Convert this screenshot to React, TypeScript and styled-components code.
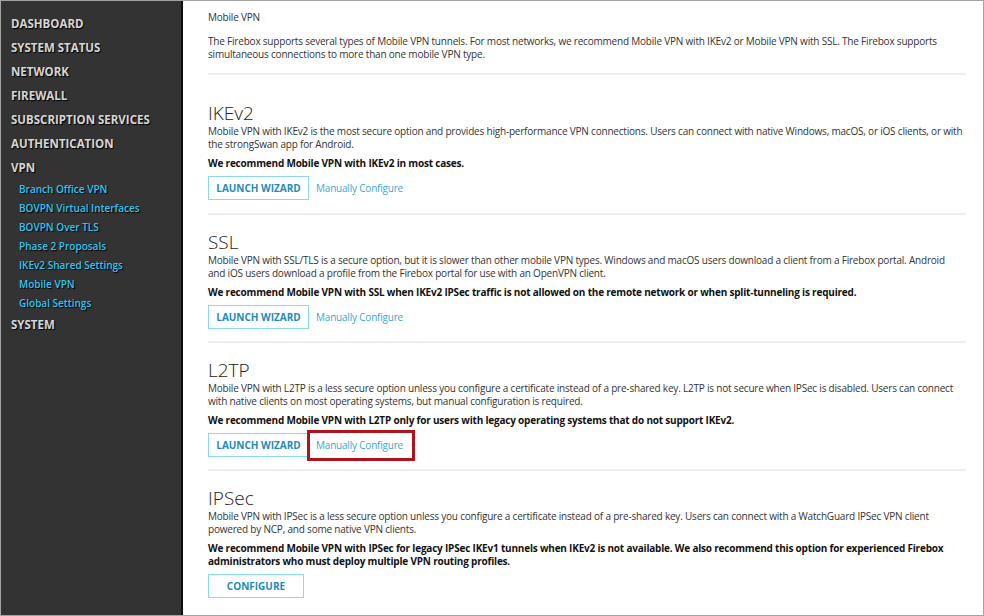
import styled, { createGlobalStyle } from "styled-components";

const GlobalStyle = createGlobalStyle`
    html, body {
        margin: 0;
        padding: 0;
        background: #ffffff;
    }
    * {
        box-sizing: border-box;
    }
`;

type NavItem = {
    label: string;
    sub?: boolean;
};

const navItems: NavItem[] = [
    { label: "DASHBOARD" },
    { label: "SYSTEM STATUS" },
    { label: "NETWORK" },
    { label: "FIREWALL" },
    { label: "SUBSCRIPTION SERVICES" },
    { label: "AUTHENTICATION" },
    { label: "VPN" },
    { label: "Branch Office VPN", sub: true },
    { label: "BOVPN Virtual Interfaces", sub: true },
    { label: "BOVPN Over TLS", sub: true },
    { label: "Phase 2 Proposals", sub: true },
    { label: "IKEv2 Shared Settings", sub: true },
    { label: "Mobile VPN", sub: true },
    { label: "Global Settings", sub: true },
    { label: "SYSTEM" },
];

type VpnSection = {
    title: string;
    description: string;
    recommend: string;
    wizard: boolean;
    highlight?: boolean;
};

const sections: VpnSection[] = [
    {
        title: "IKEv2",
        description:
            "Mobile VPN with IKEv2 is the most secure option and provides high-performance VPN connections. Users can connect with native Windows, macOS, or iOS clients, or with the strongSwan app for Android.",
        recommend: "We recommend Mobile VPN with IKEv2 in most cases.",
        wizard: true,
    },
    {
        title: "SSL",
        description:
            "Mobile VPN with SSL/TLS is a secure option, but it is slower than other mobile VPN types. Windows and macOS users download a client from a Firebox portal. Android and iOS users download a profile from the Firebox portal for use with an OpenVPN client.",
        recommend:
            "We recommend Mobile VPN with SSL when IKEv2 IPSec traffic is not allowed on the remote network or when split-tunneling is required.",
        wizard: true,
    },
    {
        title: "L2TP",
        description:
            "Mobile VPN with L2TP is a less secure option unless you configure a certificate instead of a pre-shared key. L2TP is not secure when IPSec is disabled. Users can connect with native clients on most operating systems, but manual configuration is required.",
        recommend:
            "We recommend Mobile VPN with L2TP only for users with legacy operating systems that do not support IKEv2.",
        wizard: true,
        highlight: true,
    },
    {
        title: "IPSec",
        description:
            "Mobile VPN with IPSec is a less secure option unless you configure a certificate instead of a pre-shared key. Users can connect with a WatchGuard IPSec VPN client powered by NCP, and some native VPN clients.",
        recommend:
            "We recommend Mobile VPN with IPSec for legacy IPSec IKEv1 tunnels when IKEv2 is not available. We also recommend this option for experienced Firebox administrators who must deploy multiple VPN routing profiles.",
        wizard: false,
    },
];

const App = () => {
    return (
        <>
            <GlobalStyle />
            <Frame>
                <Sidebar>
                    {navItems.map((item) => (
                        <NavLink key={item.label} $sub={item.sub}>
                            {item.label}
                        </NavLink>
                    ))}
                </Sidebar>
                <Content>
                    <PageTitle>Mobile VPN</PageTitle>
                    <Intro>
                        The Firebox supports several types of Mobile VPN tunnels. For most
                        networks, we recommend Mobile VPN with IKEv2 or Mobile VPN with SSL.
                        The Firebox supports simultaneous connections to more than one mobile
                        VPN type.
                    </Intro>
                    {sections.map((section, index) => (
                        <Section key={section.title} $first={index === 0}>
                            <SectionTitle>{section.title}</SectionTitle>
                            <Text>{section.description}</Text>
                            <Recommend>{section.recommend}</Recommend>
                            <Actions>
                                {section.wizard ? (
                                    <>
                                        <OutlineButton $wide>LAUNCH WIZARD</OutlineButton>
                                        <TextLink $highlight={section.highlight}>
                                            Manually Configure
                                        </TextLink>
                                    </>
                                ) : (
                                    <OutlineButton>CONFIGURE</OutlineButton>
                                )}
                            </Actions>
                        </Section>
                    ))}
                </Content>
            </Frame>
        </>
    );
};

const Frame = styled.div`
    width: 984px;
    height: 616px;
    border: 1px solid #a3a3a3;
    display: flex;
    overflow: hidden;
    font-family: "Open Sans", "Liberation Sans", sans-serif;
`;

const Sidebar = styled.nav`
    width: 182px;
    flex-shrink: 0;
    background: #333333;
    border-right: 2px solid #0e0e0e;
    padding: 11px 0 0 0;
    display: flex;
    flex-direction: column;
`;

const NavLink = styled.div<{ $sub?: boolean }>`
    padding-left: ${({ $sub }) => ($sub ? "18px" : "10px")};
    height: ${({ $sub }) => ($sub ? "19px" : "24px")};
    line-height: ${({ $sub }) => ($sub ? "19px" : "24px")};
    font-size: ${({ $sub }) => ($sub ? "10px" : "11.5px")};
    font-weight: ${({ $sub }) => ($sub ? 600 : 700)};
    color: ${({ $sub }) => ($sub ? "#30c6f4" : "#d6d6d6")};
    text-shadow: 1px 1px 1px #000000;
    white-space: nowrap;
`;

const Content = styled.main`
    flex: 1;
    padding: 10px 17px 0 25px;
    color: #333333;
    font-size: 10px;
    line-height: 13px;
    letter-spacing: -0.2px;
`;

const PageTitle = styled.div`
    font-size: 10px;
    line-height: 13px;
    margin-bottom: 11px;
`;

const Intro = styled.p`
    margin: 0;
    padding-bottom: 12px;
    border-bottom: 2px solid #ededed;
`;

const Section = styled.section<{ $first?: boolean }>`
    padding: ${({ $first }) => ($first ? "26px 0 13px 0" : "15px 0 12px 0")};
    border-bottom: 2px solid #ededed;
    &:last-child {
        border-bottom: none;
    }
`;

const SectionTitle = styled.h2`
    margin: 0;
    font-size: 19px;
    line-height: 24px;
    font-weight: 300;
    letter-spacing: 0;
    color: #222222;
`;

const Text = styled.p`
    margin: 0;
    max-width: 755px;
`;

const Recommend = styled.p`
    margin: 6px 0 0 0;
    font-weight: 700;
    color: #111111;
`;

const Actions = styled.div`
    display: flex;
    align-items: center;
    gap: 7px;
    margin-top: 6px;
`;

const OutlineButton = styled.button<{ $wide?: boolean }>`
    width: ${({ $wide }) => ($wide ? "101px" : "96px")};
    height: 24px;
    border: 1px solid #8ad9ee;
    background: #ffffff;
    color: #1e8db6;
    font-family: "Open Sans", "Liberation Sans", sans-serif;
    font-size: 10px;
    font-weight: 700;
    letter-spacing: 0;
    padding: 0;
`;

const TextLink = styled.span<{ $highlight?: boolean }>`
    position: relative;
    color: #39a7d2;
    font-size: 10px;
    line-height: 24px;
    &::after {
        content: "";
        display: ${({ $highlight }) => ($highlight ? "block" : "none")};
        position: absolute;
        top: -3px;
        bottom: -4px;
        left: -9px;
        right: -12px;
        border: 3px solid #b0131b;
    }
`;

export default App;
